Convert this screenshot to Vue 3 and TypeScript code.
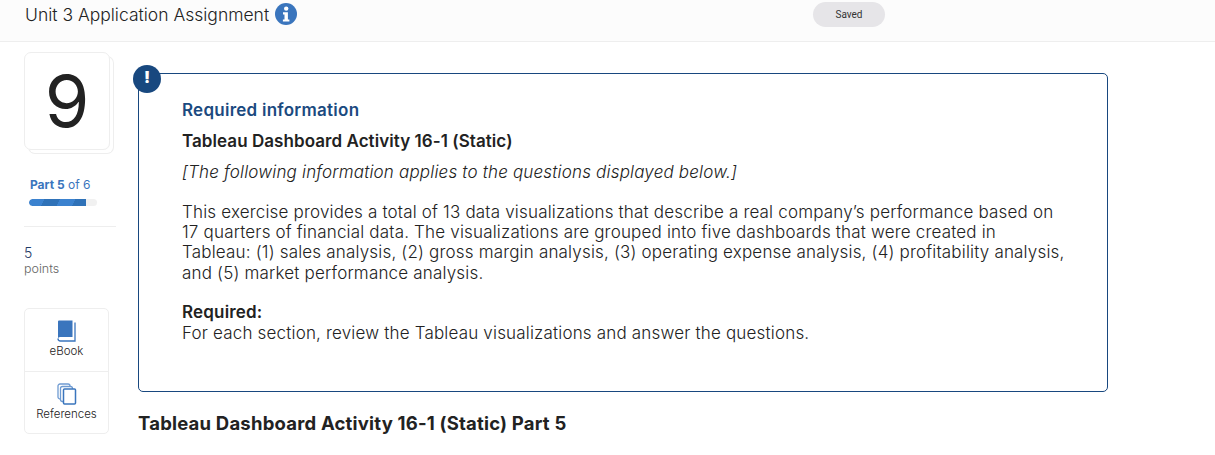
<template>
  <div class="page">
    <header class="topbar">
      <div class="title-wrap">
        <span class="title">Unit 3 Application Assignment</span>
        <svg class="info-icon" width="22" height="22" viewBox="0 0 22 22">
          <circle cx="11" cy="11" r="11" fill="#3a75bd" />
          <circle cx="11.2" cy="5.6" r="2.2" fill="#fff" />
          <path d="M8 9.200h4.900v7.200h1.500v2.100H7.900v-2.100h1.600v-5H8z" fill="#fff" />
        </svg>
      </div>
      <div class="saved">Saved</div>
    </header>

    <div class="content">
      <aside class="side">
        <div class="num-card">
          <div class="num">9</div>
        </div>
        <div class="part">
          <div class="part-label"><b>Part 5</b> of 6</div>
          <div class="track">
            <div class="fill" :style="{ width: (part / total) * 100 + '%' }"></div>
          </div>
        </div>
        <div class="points">
          <div class="points-val">{{ points }}</div>
          <div class="points-lbl">points</div>
        </div>
        <div class="tools">
          <div class="tool">
            <svg width="20" height="22" viewBox="0 0 20 22">
              <path d="M1 1.500Q1 .5 2 .5h13.500v16.500H3Q1 17 1 19z" fill="#3a75bd" />
              <path d="M1 18.500q0 2.500 2.500 2.500h14.500V2.500" fill="none" stroke="#3a75bd" stroke-width="1.300" />
            </svg>
            <span>eBook</span>
          </div>
          <div class="tool">
            <svg width="20" height="22" viewBox="0 0 20 22">
              <rect x="1" y="1" width="12" height="15" rx="2" fill="#fff" stroke="#6f9bd2" stroke-width="1.300" />
              <rect x="3.500" y="3.500" width="12" height="15" rx="2" fill="#fff" stroke="#6f9bd2" stroke-width="1.300" />
              <rect x="6.500" y="6" width="12" height="15" rx="1" fill="#fff" stroke="#3a75bd" stroke-width="1.500" />
            </svg>
            <span>References</span>
          </div>
        </div>
      </aside>

      <main class="main">
        <section class="info-box">
          <div class="badge">!</div>
          <h2 class="req-head">Required information</h2>
          <h3 class="activity">Tableau Dashboard Activity 16-1 (Static)</h3>
          <p class="applies">[The following information applies to the questions displayed below.]</p>
          <p class="body-text">
            This exercise provides a total of 13 data visualizations that describe a real company’s performance based on<br />
            17 quarters of financial data. The visualizations are grouped into five dashboards that were created in<br />
            Tableau: (1) sales analysis, (2) gross margin analysis, (3) operating expense analysis, (4) profitability analysis,<br />
            and (5) market performance analysis.
          </p>
          <p class="req-block">
            <b>Required:</b><br />
            For each section, review the Tableau visualizations and answer the questions.
          </p>
        </section>
        <h2 class="part-title">Tableau Dashboard Activity 16-1 (Static) Part 5</h2>
      </main>
    </div>
  </div>
</template>

<script setup lang="ts">
const part = 5
const total = 6
const points = 5
</script>

<style>
html,
body {
  margin: 0;
  background: #fff;
  overflow: hidden;
}
</style>

<style scoped>
.page {
  width: 1215px;
  height: 455px;
  overflow: hidden;
  font-family: Inter, "Open Sans", sans-serif;
  color: #222;
}

.topbar {
  height: 42px;
  box-sizing: border-box;
  border-bottom: 1px solid #eeeeee;
  background: #fcfcfc;
  display: flex;
  align-items: flex-start;
  padding-left: 25px;
}

.title-wrap {
  display: flex;
  align-items: center;
  gap: 6px;
  height: 28px;
  width: 788px;
  flex: none;
}

.title {
  font-size: 17.500px;
  font-weight: 300;
  color: #222;
}

.info-icon {
  flex: none;
}

.saved {
  width: 72px;
  height: 25px;
  margin-top: 2px;
  border-radius: 13px;
  background: #e6e5e8;
  font-family: Roboto, sans-serif;
  font-size: 10px;
  line-height: 25px;
  text-align: center;
  color: #333;
}

.content {
  display: flex;
  padding: 10px 0 0 24px;
}

.side {
  width: 92px;
  flex: none;
}

.num-card {
  width: 84px;
  height: 96px;
  border: 1px solid #eeeeee;
  border-radius: 7px;
  box-shadow: 4px 4px 0 -1px #fff, 4px 4px 0 0 #eeeeee;
  display: flex;
  align-items: center;
  justify-content: center;
}

.num {
  font-size: 72px;
  line-height: 1;
  color: #222;
  font-weight: 400;
}

.part {
  padding: 27px 0 0 6px;
}

.part-label {
  font-size: 12px;
  line-height: 15px;
  color: #3a75bd;
}

.part-label b {
  font-weight: 700;
}

.track {
  width: 68px;
  height: 7px;
  margin-top: 7px;
  margin-left: -1px;
  border-radius: 4px;
  background: #f1f1f1;
  overflow: hidden;
}

.fill {
  height: 100%;
  border-radius: 4px 0 0 4px;
  background: repeating-linear-gradient(115deg, #3b82cf 0 14px, #2f72b8 14px 28px);
}

.points {
  border-top: 1px solid #eeeeee;
  margin-top: 20px;
  padding-top: 17px;
}

.points-val {
  font-size: 14px;
  line-height: 17px;
  font-weight: 300;
  color: #1f3a66;
}

.points-lbl {
  font-size: 12.500px;
  line-height: 15px;
  font-weight: 300;
  color: #666;
}

.tools {
  width: 83px;
  margin-top: 32px;
  border: 1px solid #eeeeee;
  border-radius: 5px;
}

.tool {
  height: 62px;
  display: flex;
  flex-direction: column;
  align-items: center;
  padding-top: 11px;
  box-sizing: border-box;
  font-size: 11.500px;
  line-height: 14px;
  font-weight: 300;
  color: #222;
  gap: 2px;
}

.tool + .tool {
  border-top: 1px solid #eeeeee;
}

.main {
  margin-left: 22px;
  width: 970px;
}

.info-box {
  position: relative;
  box-sizing: border-box;
  width: 970px;
  height: 319px;
  margin-top: 21px;
  padding: 25px 30px 0 43px;
  border: 1px solid #18487f;
  border-radius: 5px;
}

.badge {
  position: absolute;
  left: -6px;
  top: -9px;
  width: 28px;
  height: 28px;
  border-radius: 50%;
  background: #18487f;
  color: #fff;
  font-weight: 900;
  font-size: 16px;
  line-height: 25px;
  text-align: center;
}

.req-head {
  margin: 0;
  font-size: 17px;
  line-height: 22px;
  font-weight: 600;
  letter-spacing: 0.25px;
  color: #1b4a80;
}

.activity {
  margin: 9px 0 0;
  font-size: 17px;
  line-height: 22px;
  font-weight: 600;
  letter-spacing: 0.06px;
  color: #222;
}

.applies {
  margin: 9px 0 0;
  font-size: 17px;
  line-height: 22px;
  font-style: italic;
  font-weight: 300;
  letter-spacing: 0.18px;
}

.body-text {
  margin: 19px 0 0;
  font-size: 17px;
  line-height: 20.200px;
  font-weight: 300;
  letter-spacing: 0.18px;
  white-space: nowrap;
}

.req-block {
  margin: 19px 0 0;
  font-size: 17px;
  line-height: 21px;
  font-weight: 300;
  letter-spacing: 0.18px;
}

.req-block b {
  font-weight: 600;
}

.part-title {
  margin: 19px 0 0;
  font-size: 18.500px;
  line-height: 24px;
  font-weight: 700;
  letter-spacing: 0.2px;
  color: #222;
}
</style>
